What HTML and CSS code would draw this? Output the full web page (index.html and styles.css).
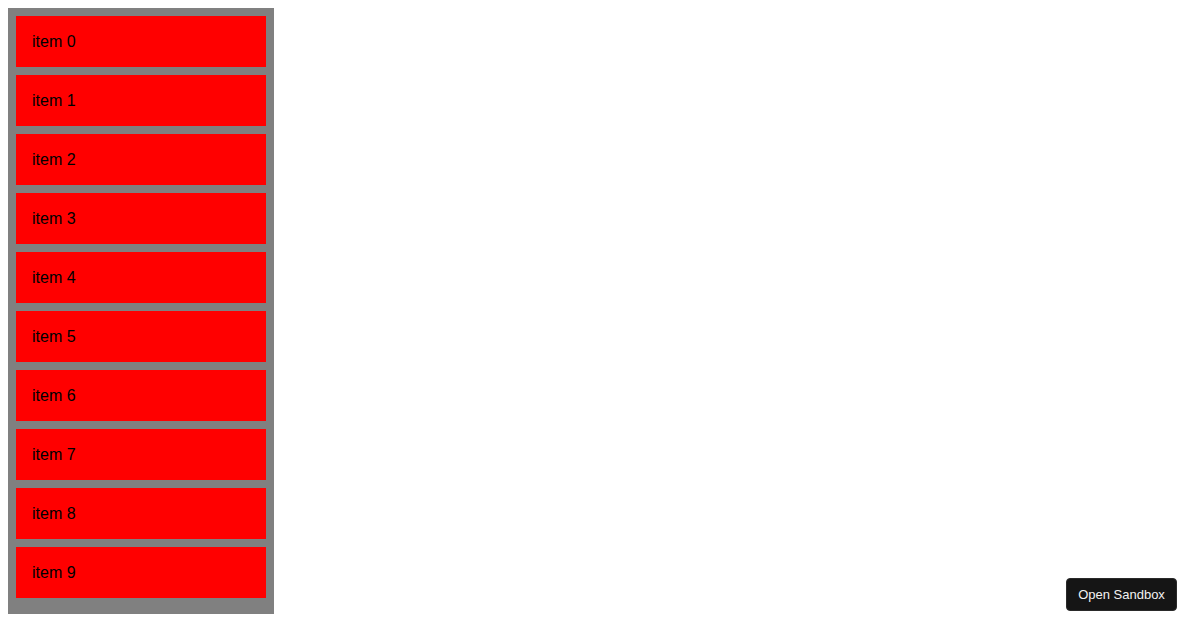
FILE: index.html
```html
<!DOCTYPE html>
<html>
<head>
<meta charset="utf-8">
<link rel="stylesheet" href="styles.css">
</head>
<body>
<div class="list">
  <div class="item">item 0</div>
  <div class="item">item 1</div>
  <div class="item">item 2</div>
  <div class="item">item 3</div>
  <div class="item">item 4</div>
  <div class="item">item 5</div>
  <div class="item">item 6</div>
  <div class="item">item 7</div>
  <div class="item">item 8</div>
  <div class="item">item 9</div>
</div>
<a class="sandbox" href="#">Open Sandbox</a>
</body>
</html>
```
FILE: styles.css
```css
html, body {
  margin: 0;
  padding: 0;
  background: #fff;
}
body {
  padding: 8px;
  font-family: "Liberation Sans", Arial, sans-serif;
}
.list {
  width: 250px;
  padding: 8px 8px 8px 8px;
  background: #808080;
}
.item {
  height: 51px;
  box-sizing: border-box;
  padding: 16px 16px;
  line-height: 19px;
  font-size: 16px;
  background: #ff0000;
  color: #000;
  margin-bottom: 8px;
}
.sandbox {
  position: fixed;
  right: 23px;
  bottom: 19px;
  width: 111px;
  height: 33px;
  box-sizing: border-box;
  display: flex;
  align-items: center;
  justify-content: center;
  background: #151515;
  color: #f2f2f2;
  font-size: 13px;
  text-decoration: none;
  border-radius: 4px;
  border: 1px solid #2a2a2a;
}
```
